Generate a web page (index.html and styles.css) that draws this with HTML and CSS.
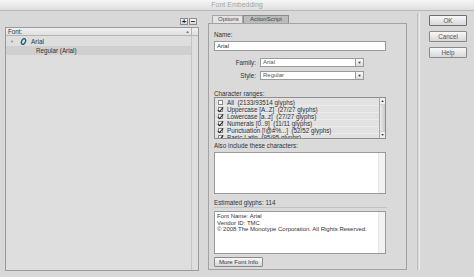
FILE: index.html
```html
<!DOCTYPE html>
<html>
<head>
    <meta charset="UTF-8">
    <title>Font Embedding</title>
    <link rel="stylesheet" href="styles.css">
</head>
<body>
    <div class="titlebar">Font Embedding</div>

    <div class="main">
        <!-- font list -->
        <div class="left">
            <div class="tools">
                <span class="tbtn">+</span>
                <span class="tbtn">&minus;</span>
            </div>
            <div class="fontlist">
                <div class="fl-head">
                    <span class="fl-title">Font:</span>
                    <span class="fl-sort">&#9650;</span>
                </div>
                <div class="fl-body">
                    <div class="fl-rows">
                        <div class="fl-row">
                            <span class="disc">&#9660;</span>
                            <svg class="otf" width="7" height="7" viewBox="0 0 7 7">
                                <ellipse cx="3.5" cy="3.5" rx="1.9" ry="3" transform="rotate(25 3.5 3.5)" fill="none" stroke="#1f5f6e" stroke-width="1.4"/>
                            </svg>
                            <span>Arial</span>
                        </div>
                        <div class="fl-row sel">Regular (Arial)</div>
                    </div>
                    <div class="fl-col"></div>
                </div>
            </div>
        </div>

        <!-- options -->
        <div class="center">
            <div class="tabs">
                <span class="tab active">Options</span>
                <span class="tab">ActionScript</span>
            </div>
            <div class="panel">
                <div class="lbl name-lbl">Name:</div>
                <div class="field name-field">Arial</div>

                <div class="row family-row">
                    <span class="row-lbl">Family:</span>
                    <div class="select"><span>Arial</span><span class="arrow">&#9660;</span></div>
                </div>
                <div class="row style-row">
                    <span class="row-lbl">Style:</span>
                    <div class="select"><span>Regular</span><span class="arrow">&#9660;</span></div>
                </div>

                <div class="lbl ranges-lbl">Character ranges:</div>
                <div class="ranges">
                    <div class="range-rows">
                        <div class="range"><span class="cb"></span>All&nbsp; (2133/93514 glyphs)</div>
                        <div class="range"><span class="cb on"></span>Uppercase [A..Z]&nbsp; (27/27 glyphs)</div>
                        <div class="range"><span class="cb on"></span>Lowercase [a..z]&nbsp; (27/27 glyphs)</div>
                        <div class="range"><span class="cb on"></span>Numerals [0..9]&nbsp; (11/11 glyphs)</div>
                        <div class="range"><span class="cb on"></span>Punctuation [!@#%...]&nbsp; (52/52 glyphs)</div>
                        <div class="range"><span class="cb on"></span>Basic Latin&nbsp; (95/95 glyphs)</div>
                    </div>
                    <div class="vscroll">
                        <span class="sarrow">&#9650;</span>
                        <span class="thumb"></span>
                        <span class="sarrow">&#9660;</span>
                    </div>
                </div>

                <div class="lbl also-lbl">Also include these characters:</div>
                <div class="textbox also-box"><div class="tb-track"></div></div>

                <div class="lbl est-lbl">Estimated glyphs: 114</div>
                <div class="divider"></div>

                <div class="textbox info-box">
                    <div class="info-text">
                        Font Name: Arial<br>
                        Vendor ID: TMC<br>
                        &copy; 2008 The Monotype Corporation. All Rights Reserved.
                    </div>
                    <div class="tb-track"></div>
                </div>

                <span class="btn more-btn">More Font Info</span>
            </div>
        </div>

        <div class="sep"></div>

        <!-- dialog buttons -->
        <div class="buttons">
            <span class="btn dlg default">OK</span>
            <span class="btn dlg">Cancel</span>
            <span class="btn dlg">Help</span>
        </div>
    </div>
</body>
</html>
```

FILE: styles.css
```css
* {
    box-sizing: border-box;
}
html, body {
    margin: 0;
    padding: 0;
}
body {
    width: 474px;
    height: 277px;
    overflow: hidden;
    background: #d8d8d8;
    font-family: "Liberation Sans", Arial, sans-serif;
    font-size: 6.3px;
    color: #333;
}

/* title bar */
.titlebar {
    height: 11px;
    line-height: 10px;
    text-align: center;
    font-size: 7px;
    color: #a4a4a4;
    background: linear-gradient(#f6f6f6, #dedede);
    border-bottom: 1px solid #b8b8b8;
}

.main {
    display: flex;
    align-items: flex-start;
}

/* left font list */
.left {
    margin-left: 5px;
    width: 194px;
}
.tools {
    height: 16px;
    display: flex;
    justify-content: flex-end;
    align-items: flex-end;
    gap: 1px;
    padding: 0 2px 2px 0;
}
.tbtn {
    width: 8px;
    height: 7px;
    line-height: 6px;
    text-align: center;
    font-size: 8px;
    font-weight: bold;
    color: #222;
    background: linear-gradient(#f8f8f8, #d6d6d6);
    border: 1px solid #8c8c8c;
}
.fontlist {
    height: 244px;
    background: #dedede;
    border: 1px solid #9a9a9a;
    display: flex;
    flex-direction: column;
}
.fl-head {
    height: 8px;
    display: flex;
    background: linear-gradient(#f0f0f0, #e0e0e0);
    border-bottom: 1px solid #b4b4b4;
    line-height: 7px;
}
.fl-title {
    flex: 1;
    padding-left: 2px;
}
.fl-sort {
    width: 8px;
    font-size: 4px;
    color: #666;
    text-align: center;
    border-right: 1px solid #b4b4b4;
    margin-right: 6px;
}
.fl-body {
    flex: 1;
    display: flex;
}
.fl-rows {
    flex: 1;
}
.fl-col {
    width: 7px;
    border-left: 1px solid #c4c4c4;
}
.fl-row {
    height: 9px;
    line-height: 9px;
    display: flex;
    align-items: center;
    padding-left: 4px;
    font-size: 6.5px;
}
.fl-row:first-child {
    margin-top: 1px;
}
.disc {
    font-size: 4px;
    color: #888;
    width: 10px;
}
.otf {
    margin-right: 4px;
}
.fl-row.sel {
    background: #cfcfcf;
    padding-left: 30px;
    font-size: 6.3px;
}

/* tabbed panel */
.center {
    margin-left: 9px;
    width: 199px;
}
.tabs {
    margin-top: 4px;
    height: 8px;
    display: flex;
    padding-left: 4px;
}
.tab {
    height: 8px;
    line-height: 7px;
    padding: 0 5px;
    border: 1px solid #8c8c8c;
    border-bottom: none;
    background: #bcbcbc;
    color: #444;
    font-size: 6px;
}
.tab.active {
    width: 31px;
    background: #e4e4e4;
    border-color: #a6a6a6;
}
.tab:not(.active) {
    width: 46px;
    text-align: center;
}
.panel {
    height: 247px;
    border: 1px solid #a2a2a2;
    padding: 0 20px 0 5px;
    background: #dadada;
}
.lbl {
    height: 7px;
    line-height: 7px;
}
.name-lbl {
    margin-top: 7px;
}
.field {
    margin-top: 3px;
    height: 10px;
    line-height: 8px;
    padding-left: 2px;
    background: #fff;
    border: 1px solid #9a9a9a;
    font-size: 6px;
}
.row {
    display: flex;
    height: 9px;
    align-items: center;
}
.family-row {
    margin-top: 7px;
}
.style-row {
    margin-top: 4px;
}
.row-lbl {
    width: 43px;
    text-align: right;
    padding-right: 1px;
}
.select {
    margin-left: 3px;
    width: 104px;
    height: 9px;
    display: flex;
    background: #fff;
    border: 1px solid #9a9a9a;
    line-height: 7px;
    font-size: 6px;
}
.select span:first-child {
    flex: 1;
    padding-left: 2px;
    color: #555;
}
.arrow {
    width: 8px;
    font-size: 4px;
    text-align: center;
    color: #333;
    background: linear-gradient(#fafafa, #dcdcdc);
    border-left: 1px solid #9a9a9a;
}
.ranges-lbl {
    margin-top: 10px;
}
.ranges {
    height: 42px;
    display: flex;
    border: 1px solid #8e8e8e;
    background: #e2e2e2;
    overflow: hidden;
}
.range-rows {
    flex: 1;
    padding-top: 1px;
}
.range {
    height: 7px;
    line-height: 7px;
    display: flex;
    align-items: center;
    padding-left: 3px;
    border-bottom: 1px solid #ececec;
    white-space: nowrap;
}
.cb {
    position: relative;
    width: 5px;
    height: 5px;
    margin-right: 4px;
    background: #fff;
    border: 1px solid #8a8a8a;
}
.cb.on::after {
    content: "";
    position: absolute;
    left: 0px;
    top: -2px;
    width: 2px;
    height: 5px;
    border: solid #222;
    border-width: 0 1.2px 1.2px 0;
    transform: rotate(40deg);
}
.vscroll {
    width: 6px;
    display: flex;
    flex-direction: column;
    border-left: 1px solid #a8a8a8;
    background: #d2d2d2;
}
.sarrow {
    height: 6px;
    font-size: 3.5px;
    line-height: 6px;
    text-align: center;
    color: #222;
    background: #eee;
}
.thumb {
    flex: 1;
    margin: 1px 0;
    background: linear-gradient(90deg, #ececec, #c8c8c8);
}
.also-lbl {
    margin-top: 3px;
}
.textbox {
    display: flex;
    background: #fff;
    border: 1px solid #9a9a9a;
}
.also-box {
    margin-top: 3px;
    height: 42px;
    justify-content: flex-end;
}
.tb-track {
    width: 7px;
    background: #f2f2f2;
    border-left: 1px solid #e8e8e8;
}
.est-lbl {
    margin-top: 5px;
}
.divider {
    margin-top: 1px;
    height: 1px;
    background: #c2c2c2;
    margin-right: -1px;
}
.info-box {
    margin-top: 3px;
    height: 43px;
}
.info-text {
    flex: 1;
    padding: 1px 2px;
    line-height: 6.6px;
    font-size: 6px;
    white-space: nowrap;
}
.btn {
    display: block;
    text-align: center;
    background: linear-gradient(#f8f8f8, #d8d8d8);
    border: 1px solid #8a8a8a;
    border-radius: 1px;
    color: #333;
}
.more-btn {
    margin-top: 3px;
    width: 49px;
    height: 10px;
    line-height: 8px;
    font-size: 6px;
}

/* separator + buttons */
.sep {
    margin-top: 2px;
    margin-left: 10px;
    width: 3px;
    height: 257px;
    border-left: 1px solid #bdbdbd;
    border-right: 1px solid #ececec;
}
.buttons {
    margin-left: 9px;
    width: 38px;
    display: flex;
    flex-direction: column;
    gap: 5px;
    padding-top: 4px;
}
.dlg {
    height: 11px;
    line-height: 9px;
    font-size: 6.3px;
    color: #555;
}
.dlg.default {
    border-color: #6e6e6e;
}
```
